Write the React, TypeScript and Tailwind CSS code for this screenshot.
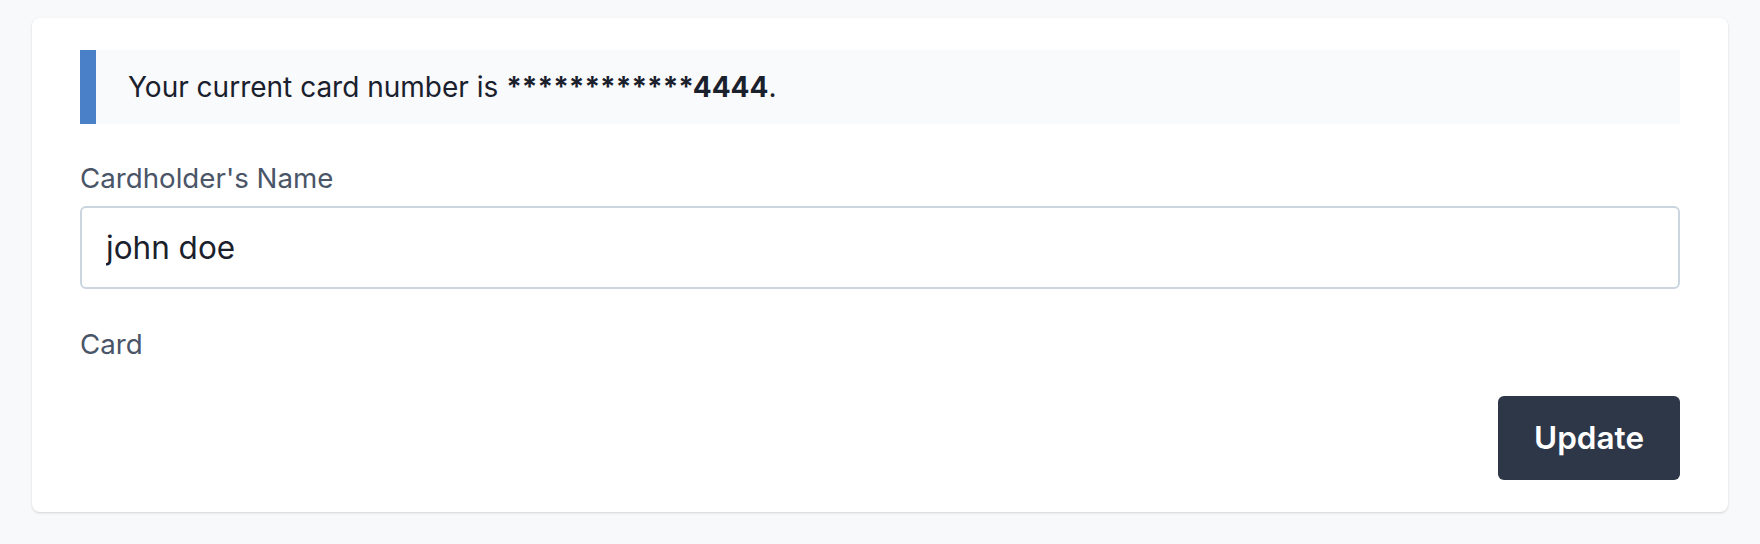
export default function App() {
  return (
    <main className="min-h-screen bg-[#f7f9fb] px-8 pt-[18px] font-['Inter','Liberation_Sans',sans-serif]">
      <form className="rounded-lg bg-white px-12 pt-8 pb-8 shadow-[0_1px_3px_rgba(0,0,0,0.1),0_1px_2px_rgba(0,0,0,0.06)]">
        <div className="flex h-[74px] items-center border-l-[16px] border-[#4a80c8] bg-[#f8fafc] pl-8 text-[28px] text-[#1a202c]">
          <p>
            Your current card number is <strong className="font-bold">************4444</strong>.
          </p>
        </div>

        <label className="mt-[34px] block text-[27.7px] leading-[40px] text-[#4a5568]">
          Cardholder's Name
        </label>
        <input
          type="text"
          defaultValue="john doe"
          className="mt-2 block h-[83px] w-full rounded-md border-2 border-[#cbd5e0] bg-white px-6 text-[31.5px] text-[#1a202c] outline-none"
        />

        <label className="mt-[35px] block text-[27.7px] leading-[40px] text-[#4a5568]">
          Card
        </label>
        <div id="card-element" />

        <div className="mt-8 flex justify-end">
          <button
            type="button"
            className="h-[84px] w-[182px] rounded-md bg-[#2d3748] text-[31.5px] font-semibold text-white"
          >
            Update
          </button>
        </div>
      </form>
    </main>
  );
}
